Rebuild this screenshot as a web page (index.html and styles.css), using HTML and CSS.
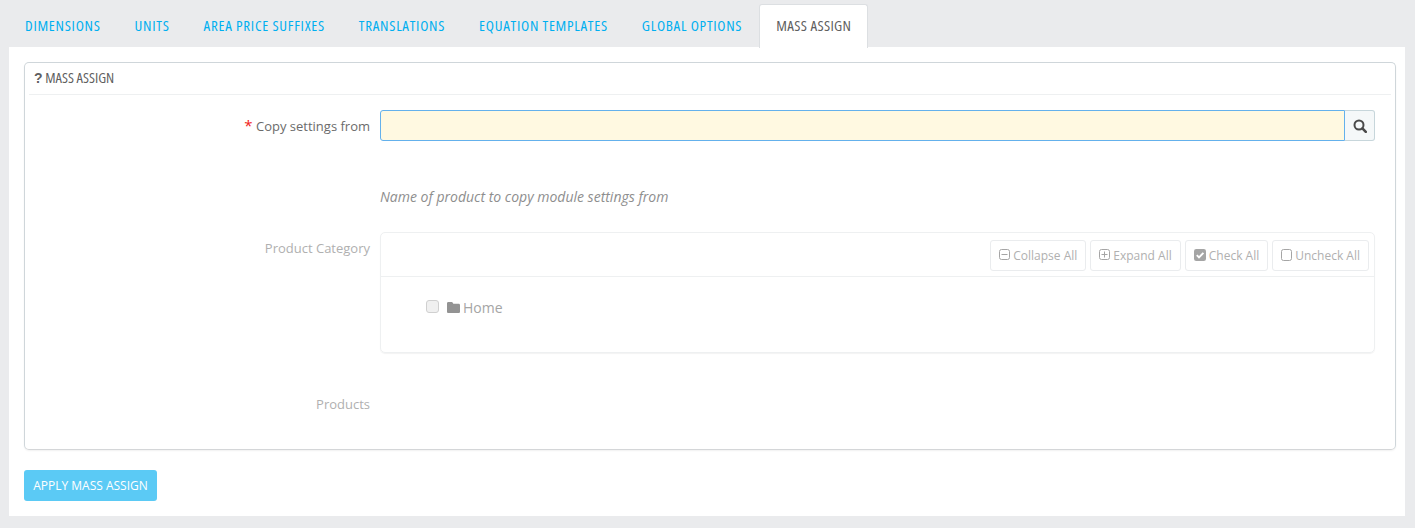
FILE: index.html
```html
<!DOCTYPE html>
<html lang="en">
<head>
<meta charset="utf-8">
<title>Mass Assign</title>
<link rel="stylesheet" href="styles.css">
</head>
<body>
<div class="page">
  <ul class="tabs">
    <li class="tab"><a>DIMENSIONS</a></li>
    <li class="tab"><a>UNITS</a></li>
    <li class="tab"><a>AREA PRICE SUFFIXES</a></li>
    <li class="tab"><a>TRANSLATIONS</a></li>
    <li class="tab"><a>EQUATION TEMPLATES</a></li>
    <li class="tab"><a>GLOBAL OPTIONS</a></li>
    <li class="tab active"><a>MASS ASSIGN</a></li>
  </ul>
  <div class="content">
    <section class="card">
      <h3 class="card-head"><span class="q">?</span> MASS ASSIGN</h3>
      <div class="row row-copy">
        <label class="label strong"><span class="req">*</span> Copy settings from</label>
        <div class="field">
          <div class="group">
            <input class="input" type="text">
            <button class="addon" type="button">
              <svg width="14" height="14" viewBox="0 0 14 14"><circle cx="6" cy="6" r="4.5" fill="none" stroke="#4a4a4a" stroke-width="2"/><path d="M9.4 9.4L12.8 12.8" stroke="#4a4a4a" stroke-width="2.6" stroke-linecap="round"/></svg>
            </button>
          </div>
        </div>
      </div>
      <p class="help">Name of product to copy module settings from</p>
      <div class="row row-cat">
        <label class="label">Product Category</label>
        <div class="field">
          <div class="tree">
            <div class="toolbar">
              <button class="tbtn" type="button">
                <svg class="ico" width="11" height="11" viewBox="0 0 11 11"><rect x=".5" y=".5" width="10" height="10" rx="2" fill="none" stroke="#a5a5a5"/><path d="M2.5 5.5H8.5" stroke="#a5a5a5"/></svg>Collapse All</button>
              <button class="tbtn" type="button">
                <svg class="ico" width="11" height="11" viewBox="0 0 11 11"><rect x=".5" y=".5" width="10" height="10" rx="2" fill="none" stroke="#a5a5a5"/><path d="M2.5 5.5H8.5M5.5 2.5V8.5" stroke="#a5a5a5"/></svg>Expand All</button>
              <button class="tbtn" type="button">
                <svg class="ico" width="12" height="12" viewBox="0 0 12 12"><rect width="12" height="12" rx="2.2" fill="#a5a5a5"/><path d="M2.8 6.2L5 8.4L9.4 3.9" fill="none" stroke="#fff" stroke-width="1.9"/></svg>Check All</button>
              <button class="tbtn" type="button">
                <svg class="ico" width="11" height="12" viewBox="0 0 11 12"><rect x=".5" y=".5" width="10" height="11" rx="2" fill="none" stroke="#a5a5a5"/></svg>Uncheck All</button>
            </div>
            <div class="tree-body">
              <span class="check"></span>
              <svg class="folder" width="13" height="11" viewBox="0 0 13 11"><path d="M1.3 0H4.6C5.3 0 5.6.4 5.9 1L6.3 1.7H11.7C12.4 1.7 13 2.3 13 3V9.7C13 10.4 12.4 11 11.7 11H1.3C.6 11 0 10.4 0 9.7V1.3C0 .6.6 0 1.3 0Z" fill="#939393"/></svg>
              <span class="home">Home</span>
            </div>
          </div>
        </div>
      </div>
      <div class="row row-prod">
        <label class="label">Products</label>
      </div>
    </section>
    <button class="apply" type="button">APPLY MASS ASSIGN</button>
  </div>
</div>
</body>
</html>
```
FILE: styles.css
```css
* { box-sizing: border-box; }
html, body { margin: 0; padding: 0; }
body {
  background: #eaebed;
  font-family: "Open Sans", sans-serif;
  font-size: 13px;
  color: #666;
}
.page { padding: 4px 10px 12px 9px; height: 528px; }
.tabs {
  display: flex;
  list-style: none;
  margin: 0 0 0 -1px;
  padding: 0;
  height: 43px;
  position: relative;
  z-index: 1;
}
.tab {
  height: 44px;
  padding: 0 16px;
  border: 1px solid transparent;
  border-bottom: 0;
  border-radius: 3px 3px 0 0;
  font-family: "Open Sans", sans-serif;
  font-stretch: 75%;
  font-size: 15px;
  letter-spacing: .72px;
  line-height: 40px;
  color: #00aff0;
  white-space: nowrap;
}
.tab.active { background: #fff; border-color: #dcdfe2; color: #5f5f5f; letter-spacing: .35px; }
.content { background: #fff; height: 469px; padding: 15px 9px 0 15px; }
.card {
  height: 388px;
  border: 1px solid #cfd6da;
  border-bottom-color: #d4d6d8;
  border-radius: 5px;
  box-shadow: 0 1px 2px rgba(0,0,0,.06);
  padding: 0 4px;
}
.card-head {
  margin: 0;
  height: 32px;
  padding-left: 5px;
  border-bottom: 1px solid #eef0f1;
  font-family: "Open Sans", sans-serif;
  font-stretch: 75%;
  font-size: 14.5px;
  font-weight: 400;
  line-height: 30px;
  color: #5f5f5f;
}
.q { font-family: "Liberation Sans", sans-serif; font-weight: 700; font-size: 14px; }
.row { display: flex; }
.label {
  width: 341px;
  flex: none;
  text-align: right;
  color: #b0b0b0;
  line-height: 18px;
}
.label.strong { color: #6b6b6b; }
.req { color: #f02020; font-size: 15px; }
.field { width: 995px; margin-left: 10px; flex: none; }
.row-copy { margin-top: 15px; }
.row-copy .label { padding-top: 6px; }
.group { display: flex; height: 31px; }
.input {
  flex: 1;
  min-width: 0;
  height: 31px;
  background: #fff9e1;
  border: 1px solid #64b1ec;
  border-radius: 3px 0 0 3px;
  outline: 0;
  padding: 0 8px;
}
.addon {
  width: 30px;
  height: 31px;
  padding: 0;
  background: #f5f8f9;
  border: 1px solid #c7d6db;
  border-left: 0;
  border-radius: 0 3px 3px 0;
  display: flex;
  align-items: center;
  justify-content: center;
}
.help {
  margin: 47px 0 0 351px;
  height: 18px;
  line-height: 18px;
  font-size: 14px;
  font-style: italic;
  color: #8e8e8e;
}
.row-cat { margin-top: 26px; }
.row-cat .label { padding-top: 7px; }
.tree {
  height: 121px;
  border: 1px solid #eef0f1;
  border-radius: 5px;
  box-shadow: 0 1px 1px rgba(0,0,0,.05);
}
.toolbar {
  height: 44px;
  border-bottom: 1px solid #eef0f1;
  padding: 7px 5px 0 0;
  display: flex;
  justify-content: flex-end;
  gap: 4px;
}
.tbtn {
  height: 31px;
  padding: 0 8px;
  background: #fff;
  border: 1px solid #eaecee;
  border-radius: 3px;
  font-family: "Open Sans", sans-serif;
  font-size: 12px;
  color: #b0b0b0;
  display: flex;
  align-items: center;
  white-space: nowrap;
}
.ico { margin-right: 3px; margin-top: -2px; }
.tree-body { display: flex; align-items: center; padding: 21px 0 0 45px; height: 40px; margin-top: 0; }
.check {
  width: 13px;
  height: 13px;
  background: #f0f0f0;
  border: 1px solid #d0d0d0;
  border-radius: 3px;
  margin-top: -3px;
}
.folder { margin-left: 8px; }
.home { margin-left: 3px; font-size: 14px; color: #a5a5a5; }
.row-prod { margin-top: 42px; }
.apply {
  display: block;
  margin-top: 20px;
  width: 133px;
  height: 31px;
  padding: 0;
  background: #5bcaf5;
  border: 0;
  border-radius: 3px;
  font-family: "Open Sans", sans-serif;
  font-size: 12px;
  color: #fff;
  white-space: nowrap;
}
```
